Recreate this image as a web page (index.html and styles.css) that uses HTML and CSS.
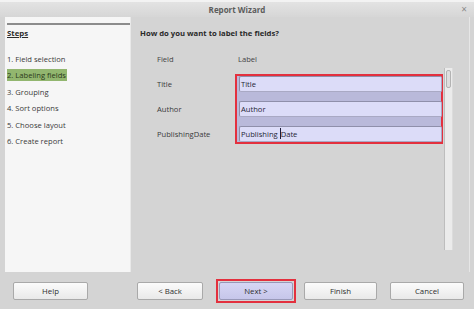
FILE: index.html
```html
<!DOCTYPE html>
<html>
<head>
<meta charset="utf-8">
<link rel="stylesheet" href="styles.css">
</head>
<body>
<div class="window">
  <div class="titlebar">
    <span class="title">Report Wizard</span>
    <span class="close">×</span>
  </div>
  <div class="main">
    <div class="steps">
      <div class="rule"></div>
      <div class="steps-head">Steps</div>
      <ul class="step-list">
        <li>1. Field selection</li>
        <li><span class="current">2. Labeling fields</span></li>
        <li>3. Grouping</li>
        <li>4. Sort options</li>
        <li>5. Choose layout</li>
        <li>6. Create report</li>
      </ul>
    </div>
    <div class="content">
      <div class="heading">How do you want to label the fields?</div>
      <div class="table-row">
        <div class="table">
          <div class="thead">
            <span class="col-field">Field</span>
            <span>Label</span>
          </div>
          <div class="rows">
            <div class="names">
              <div class="name">Title</div>
              <div class="name">Author</div>
              <div class="name">PublishingDate</div>
            </div>
            <div class="box">
              <div class="input">Title</div>
              <div class="input">Author</div>
              <div class="input">Publishing <span class="caret"></span>Date</div>
            </div>
          </div>
        </div>
        <div class="scroll"><div class="thumb"></div></div>
      </div>
    </div>
  </div>
  <div class="buttons">
    <button class="btn help">Help</button>
    <button class="btn back">&lt; Back</button>
    <span class="mark"><button class="btn next">Next &gt;</button></span>
    <button class="btn finish">Finish</button>
    <button class="btn cancel">Cancel</button>
  </div>
</div>
</body>
</html>
```
FILE: styles.css
```css
* { box-sizing: border-box; }
html, body { margin: 0; padding: 0; }
body {
  width: 474px; height: 309px; overflow: hidden;
  font-family: "Open Sans", "Noto Sans", sans-serif;
  font-size: 7.6px; color: #333;
  background: #d4d4d4;
}
.window { width: 474px; height: 309px; display: flex; flex-direction: column; background: #d4d4d4; }
.titlebar {
  height: 17px; flex: none; position: relative;
  border-top: 2px solid #f3f3f3;
  background: linear-gradient(#e3e3e3, #d6d6d6);
  display: flex; align-items: center; justify-content: center;
}
.title { font-weight: bold; font-size: 8px; color: #5c5c5c; line-height: 12px; }
.close { position: absolute; right: 7px; top: 0; font-size: 10px; color: #8a8a8a; line-height: 14px; }
.main { height: 255px; flex: none; display: flex; padding: 0 4px 0 5px; }
.steps { width: 126px; background: #f6f6f6; border-right: 1px solid #e9e9e9; padding: 6px 0 0 2px; }
.rule { height: 2px; background: #8c8c8c; }
.steps-head { margin-top: 1px; line-height: 14px; font-weight: bold; text-decoration: underline; color: #2c2c2c; font-size: 7.8px; }
.step-list { list-style: none; margin: 11px 0 0; padding: 0; }
.step-list li { height: 16.4px; line-height: 16.4px; color: #3a3a3a; }
.current { background: #92b66f; color: #2a3a1a; display: inline-block; line-height: 12px; padding-right: 1px; }
.content { flex: 1; background: #d4d4d4; border-right: 1px solid #e6e6e6; padding: 10px 9px 0 9px; display: flex; flex-direction: column; }
.heading { font-weight: bold; line-height: 12px; color: #2a2a2a; font-size: 7.7px; }
.table-row { display: flex; margin-top: 14px; }
.table { padding-left: 17px; width: 303px; }
.thead { line-height: 12px; color: #444; display: flex; }
.col-field { width: 81px; }
.rows { display: flex; align-items: flex-start; margin-top: 9px; }
.names { width: 78px; padding-top: 2px; }
.name { height: 25px; line-height: 16px; color: #3a3a3a; }
.box {
  width: 208px; border: 2px solid #e3303e; background: #b9b9da;
  padding: 0 0 0 2px; display: flex; flex-direction: column; gap: 9px;
}
.input {
  height: 16px; line-height: 14px; background: #dcdcf8;
  border: 1px solid #a9a9c4; border-top-color: #8f8faa; border-left-color: #8f8faa;
  border-radius: 2px; padding-left: 1px; color: #262636; margin-right: -1px;
}
.caret { display: inline-block; width: 1px; height: 11px; background: #1c1c3a; vertical-align: -2px; }
.scroll {
  width: 9px; height: 182px; margin-top: 15px; margin-left: 1px;
  background: #ebebeb; border-left: 1px solid #bdbdbd; border-right: 1px solid #dcdcdc;
  padding: 2px 1px 0 1px;
}
.thumb { height: 18px; background: #dedede; border: 1px solid #b3b3b3; border-radius: 2px; }
.buttons { flex: 1; display: flex; align-items: center; padding: 1px 0 0 13px; }
.btn {
  font-family: inherit; font-size: 7.8px; color: #2e2e2e;
  height: 18px; padding: 0; margin: 0;
  border: 1px solid #a9a9a9; border-radius: 2px;
  background: linear-gradient(#fbfbfb, #e9e9e9);
}
.help { width: 75px; }
.back { width: 66px; margin-left: 49px; }
.mark { margin-left: 13px; border: 2px solid #e3303e; padding: 1px; display: flex; }
.next { width: 74px; background: linear-gradient(#d6d6f4, #c6c6ea); border-color: #9898b8; }
.finish { width: 73px; margin-left: 8px; }
.cancel { width: 74px; margin-left: 13px; }
```
